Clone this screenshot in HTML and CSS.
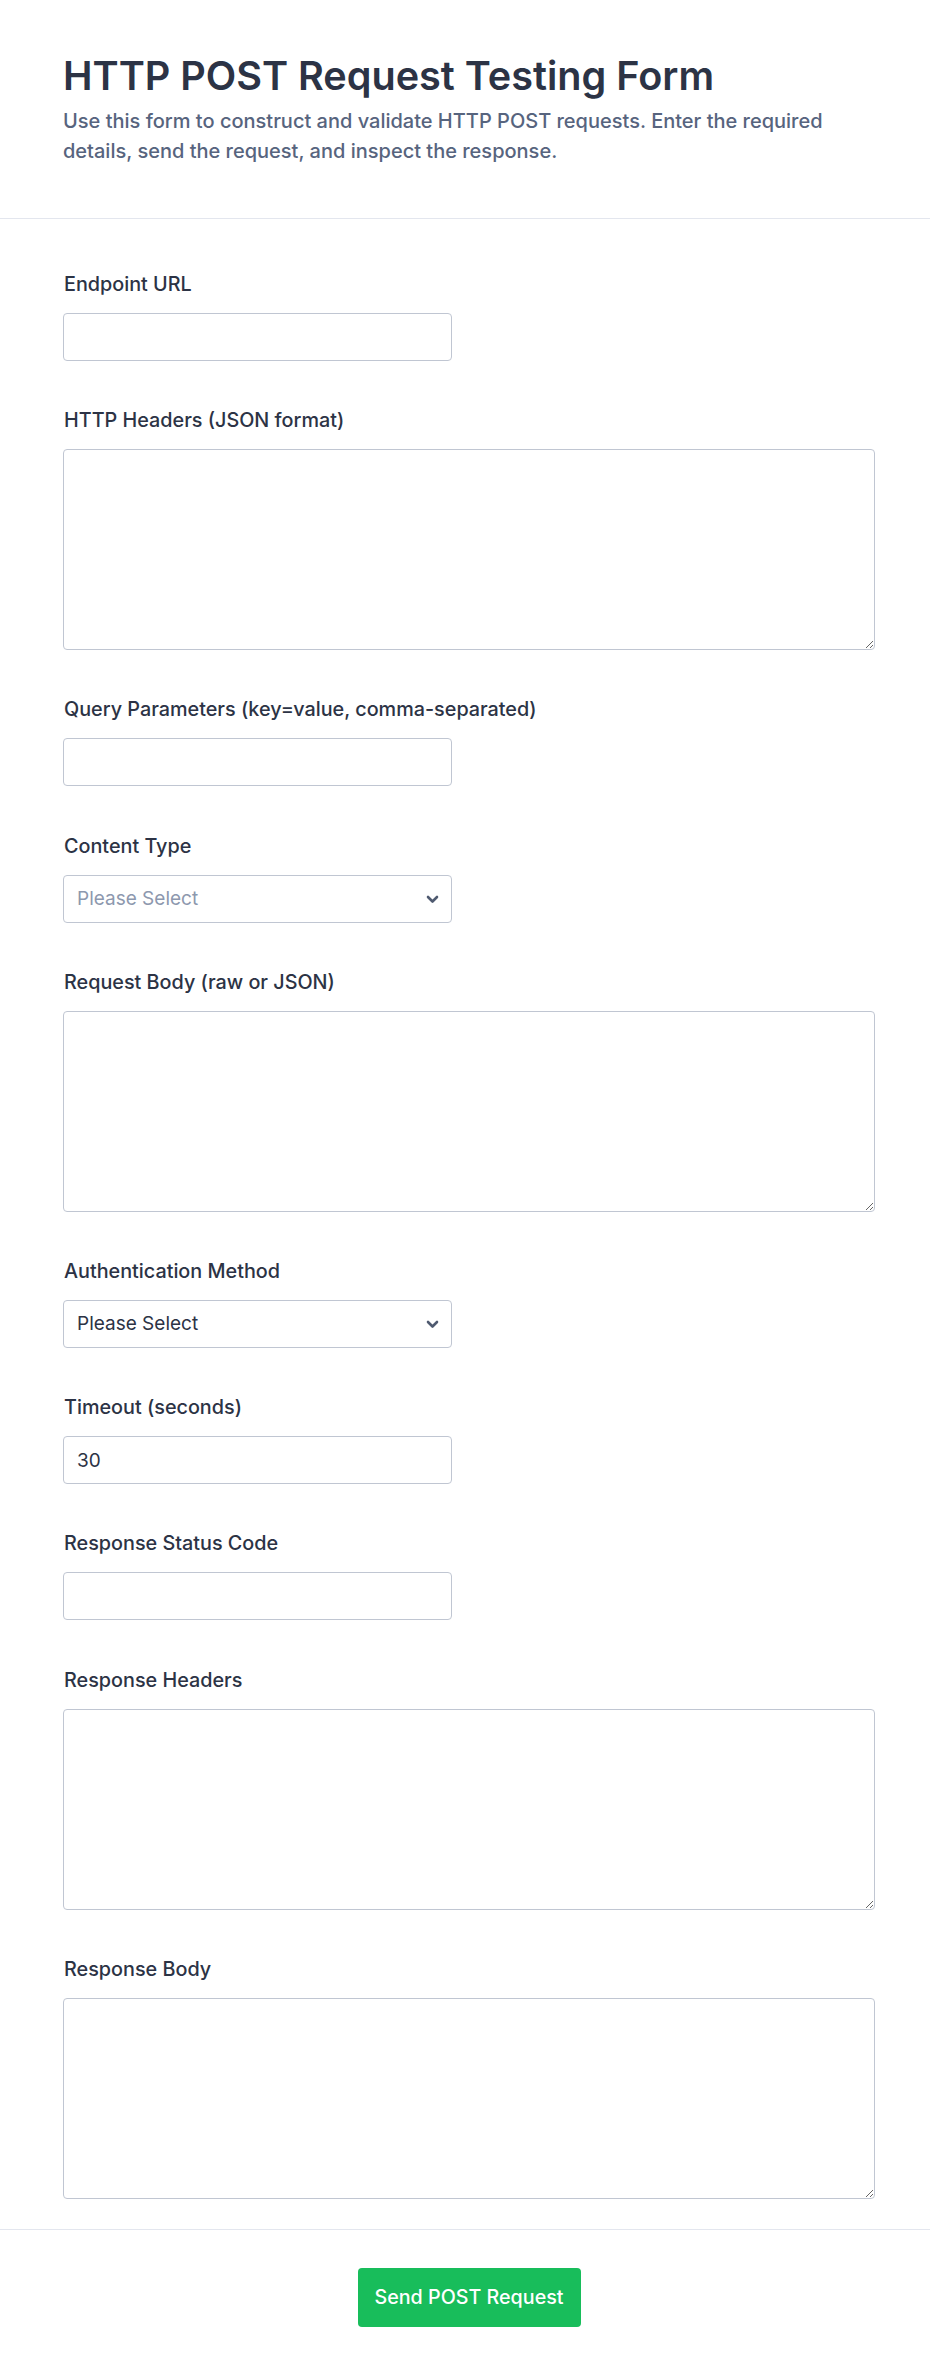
FILE: index.html
```html
<!DOCTYPE html>
<html lang="en">
<head>
    <meta charset="UTF-8">
    <meta name="viewport" content="width=device-width, initial-scale=1.0">
    <title>HTTP POST Request Testing Form</title>
    <link rel="stylesheet" href="styles.css">
</head>
<body>
    <div class="form-header">
        <h1>HTTP POST Request Testing Form</h1>
        <p>Use this form to construct and validate HTTP POST requests. Enter the required details, send the request, and inspect the response.</p>
    </div>

    <form class="form-body" onsubmit="return false;">
        <div class="field">
            <label for="endpoint">Endpoint URL</label>
            <input type="text" id="endpoint" class="short">
        </div>
        <div class="field">
            <label for="headers">HTTP Headers (JSON format)</label>
            <textarea id="headers"></textarea>
        </div>
        <div class="field">
            <label for="query">Query Parameters (key=value, comma-separated)</label>
            <input type="text" id="query" class="short">
        </div>
        <div class="field">
            <label for="contentType">Content Type</label>
            <div class="select-wrap">
                <select id="contentType" class="placeholder">
                    <option value="">Please Select</option>
                    <option>application/json</option>
                    <option>application/x-www-form-urlencoded</option>
                    <option>multipart/form-data</option>
                    <option>text/plain</option>
                </select>
                <svg class="chevron" width="13" height="9" viewBox="0 0 13 9"><path d="M2 2l4.5 4.5L11 2" fill="none" stroke="#4f5a70" stroke-width="2.6" stroke-linecap="round" stroke-linejoin="round"/></svg>
            </div>
        </div>
        <div class="field">
            <label for="body">Request Body (raw or JSON)</label>
            <textarea id="body"></textarea>
        </div>
        <div class="field">
            <label for="auth">Authentication Method</label>
            <div class="select-wrap">
                <select id="auth">
                    <option value="">Please Select</option>
                    <option>None</option>
                    <option>Basic Auth</option>
                    <option>Bearer Token</option>
                    <option>API Key</option>
                </select>
                <svg class="chevron" width="13" height="9" viewBox="0 0 13 9"><path d="M2 2l4.5 4.5L11 2" fill="none" stroke="#4f5a70" stroke-width="2.6" stroke-linecap="round" stroke-linejoin="round"/></svg>
            </div>
        </div>
        <div class="field">
            <label for="timeout">Timeout (seconds)</label>
            <input type="number" id="timeout" class="short" value="30">
        </div>
        <div class="field">
            <label for="statusCode">Response Status Code</label>
            <input type="text" id="statusCode" class="short">
        </div>
        <div class="field">
            <label for="respHeaders">Response Headers</label>
            <textarea id="respHeaders"></textarea>
        </div>
        <div class="field">
            <label for="respBody">Response Body</label>
            <textarea id="respBody"></textarea>
        </div>
    </form>

    <div class="form-footer">
        <button type="button">Send POST Request</button>
    </div>
</body>
</html>
```

FILE: styles.css
```css
* {
    box-sizing: border-box;
}

body {
    margin: 0;
    font-family: Inter, "Noto Sans", Arial, sans-serif;
    background: #fff;
    color: #2c3345;
}

.form-header {
    padding: 52px 55px 52px 63px;
    border-bottom: 1px solid #e3e6ee;
}

.form-header h1 {
    margin: 0;
    font-size: 39.6px;
    line-height: 48px;
    font-weight: 600;
    color: #2c3345;
}

.form-header p {
    margin: 6px 0 0;
    font-size: 20px;
    line-height: 30px;
    font-weight: 500;
    color: #57647e;
}

.form-body {
    padding: 53px 55px 30px 63px;
    display: flex;
    flex-direction: column;
    gap: 47.2px;
}

.field {
    display: flex;
    flex-direction: column;
}

.field label {
    display: block;
    font-size: 19.8px;
    line-height: 24px;
    font-weight: 500;
    margin-bottom: 17px;
    padding-left: 1px;
    color: #2c3345;
}

input, select, textarea {
    font-family: Inter, "Noto Sans", Arial, sans-serif;
    font-size: 19px;
    color: #2c3345;
    border: 1px solid #c0c6d2;
    border-radius: 4px;
    background: #fff;
    outline: none;
}

input.short {
    width: 389px;
    height: 48px;
    padding: 0 13px;
}

input[type=number] {
    -moz-appearance: textfield;
}

input[type=number]::-webkit-inner-spin-button,
input[type=number]::-webkit-outer-spin-button {
    -webkit-appearance: none;
    margin: 0;
}

textarea {
    width: 812px;
    height: 201px;
    padding: 10px 14px;
    resize: vertical;
}

.select-wrap {
    position: relative;
    width: 389px;
}

select {
    width: 100%;
    height: 48px;
    padding: 0 40px 0 13px;
    -webkit-appearance: none;
    appearance: none;
}

select.placeholder {
    color: #8d98ae;
}

.chevron {
    position: absolute;
    right: 13px;
    top: 20px;
    pointer-events: none;
}

.form-footer {
    border-top: 1px solid #e3e6ee;
    padding: 38px 55px 49px 63px;
    display: flex;
    justify-content: center;
}

button {
    font-family: Inter, "Noto Sans", Arial, sans-serif;
    font-size: 19.7px;
    font-weight: 500;
    width: 223px;
    height: 59px;
    background-color: #18bd5b;
    color: #fff;
    border: none;
    border-radius: 4px;
    cursor: pointer;
}

button:hover {
    background-color: #16aa52;
}
```
